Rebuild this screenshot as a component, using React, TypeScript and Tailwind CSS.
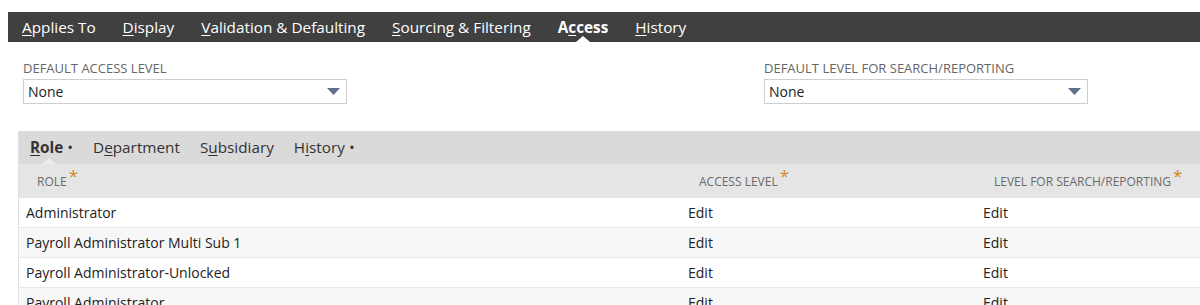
import React from "react";

const tabs = [
  { pre: "", key: "A", post: "pplies To" },
  { pre: "", key: "D", post: "isplay" },
  { pre: "", key: "V", post: "alidation & Defaulting" },
  { pre: "", key: "S", post: "ourcing & Filtering" },
  { pre: "A", key: "c", post: "cess", active: true },
  { pre: "", key: "H", post: "istory" },
];

const subTabs = [
  { pre: "", key: "R", post: "ole", dot: true, active: true },
  { pre: "D", key: "e", post: "partment" },
  { pre: "S", key: "u", post: "bsidiary" },
  { pre: "H", key: "i", post: "story", dot: true },
];

const rows = [
  "Administrator",
  "Payroll Administrator Multi Sub 1",
  "Payroll Administrator-Unlocked",
  "Payroll Administrator",
];

const Arrow = () => (
  <svg width="13" height="7" viewBox="0 0 13 7" className="shrink-0">
    <path d="M0 0 H13 L6.5 7 Z" fill="#5d6f8c" />
  </svg>
);

const Select = ({ label }: { label: string }) => (
  <div className="w-[324px]">
    <p className="text-[13px] leading-[17px] text-[#666] uppercase mb-[2px]">{label}</p>
    <div className="h-[25px] border border-[#cfcfcf] bg-white flex items-center justify-between pl-[4px] pr-[6px]">
      <span className="text-[14px] text-[#222]">None</span>
      <Arrow />
    </div>
  </div>
);

const Star = () => <span className="text-[#d0891c] text-[17px] leading-none relative top-[-4px] ml-[2px]">*</span>;

export default function App() {
  return (
    <div className="w-[1200px] h-[305px] overflow-hidden bg-white pt-[12px] font-['Open_Sans',sans-serif]">
      <div className="ml-[8px] h-[30px] bg-[#404040] flex items-center pl-[14px] gap-[27px] text-white text-[15.3px]">
        {tabs.map((t) => (
          <div key={t.key + t.post} className={`relative h-full flex items-center ${t.active ? "font-bold" : ""}`}>
            <span>
              {t.pre}
              <u className="underline-offset-[2px] decoration-[1px]">{t.key}</u>
              {t.post}
            </span>
            {t.active && (
              <span className="absolute bottom-0 left-1/2 -translate-x-1/2 w-0 h-0 border-l-[7px] border-r-[7px] border-b-[6px] border-l-transparent border-r-transparent border-b-white" />
            )}
          </div>
        ))}
      </div>

      <div className="flex pt-[18px] pl-[23px] gap-[417px]">
        <Select label="Default Access Level" />
        <Select label="Default Level for Search/Reporting" />
      </div>

      <div className="ml-[18px] mt-[27px] border-l border-[#e0e0e0]">
        <div className="h-[33px] bg-[#dadada] flex items-center pl-[11px] gap-[20px] text-[15.3px] text-[#333]">
          {subTabs.map((t) => (
            <div key={t.post} className={`relative h-full flex items-center ${t.active ? "font-bold" : ""}`}>
              <span>
                {t.pre}
                <u className="underline-offset-[2px] decoration-[1px]">{t.key}</u>
                {t.post}
                {t.dot && <span className="font-normal ml-[4px]">•</span>}
              </span>
              {t.active && (
                <span className="absolute bottom-0 left-[12px] w-0 h-0 border-l-[7px] border-r-[7px] border-b-[6px] border-l-transparent border-r-transparent border-b-[#ededed]" />
              )}
            </div>
          ))}
        </div>

        <div className="grid grid-cols-[662px_295px_1fr] h-[34px] bg-[#e5e5e5] items-center text-[12px] text-[#6b6b6b] uppercase">
          <div className="pl-[18px]">Role<Star /></div>
          <div className="pl-[18px]">Access Level<Star /></div>
          <div className="pl-[18px]">Level for Search/Reporting<Star /></div>
        </div>

        {rows.map((r, i) => (
          <div
            key={r}
            className={`grid grid-cols-[662px_295px_1fr] h-[30px] items-center text-[14px] text-[#222] border-b border-[#e8e8e8] ${i % 2 ? "bg-[#f7f7f7]" : "bg-white"}`}
          >
            <div className="pl-[7px]">{r}</div>
            <div className="pl-[7px]">Edit</div>
            <div className="pl-[7px]">Edit</div>
          </div>
        ))}
      </div>
    </div>
  );
}
